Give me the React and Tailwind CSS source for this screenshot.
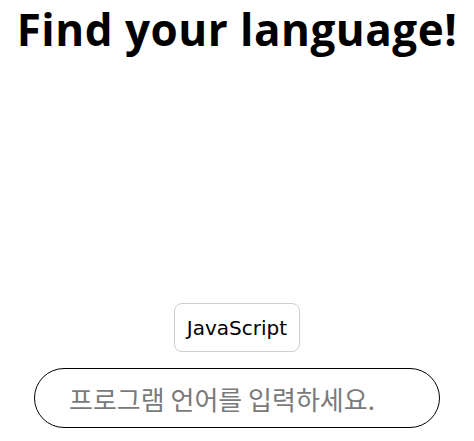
import { useState } from "react";

function App() {
  const [query, setQuery] = useState("");

  return (
    <div className="flex min-h-screen flex-col items-center bg-white font-['DejaVu_Sans',sans-serif]">
      <h1 className="mt-[2px] w-full whitespace-nowrap text-center font-['Open_Sans',sans-serif] text-[44px] font-bold leading-[54px] tracking-[0.5px] text-black">
        Find your language!
      </h1>

      <div className="mt-auto flex w-full flex-col items-center pb-[13px]">
        <button className="h-[49px] rounded-lg border border-[#cfcfcf] bg-white px-[12px] text-[20px] text-black">
          JavaScript
        </button>

        <input
          value={query}
          onChange={(e) => setQuery(e.target.value)}
          placeholder="프로그램 언어를 입력하세요."
          className="mt-[16px] h-[60px] w-[406px] rounded-full border-[1.5px] border-black px-[34px] font-['Noto_Sans_CJK_KR',sans-serif] text-[26px] text-black outline-none placeholder:text-[#7a7a7a]"
        />
      </div>
    </div>
  );
}

export default App;
